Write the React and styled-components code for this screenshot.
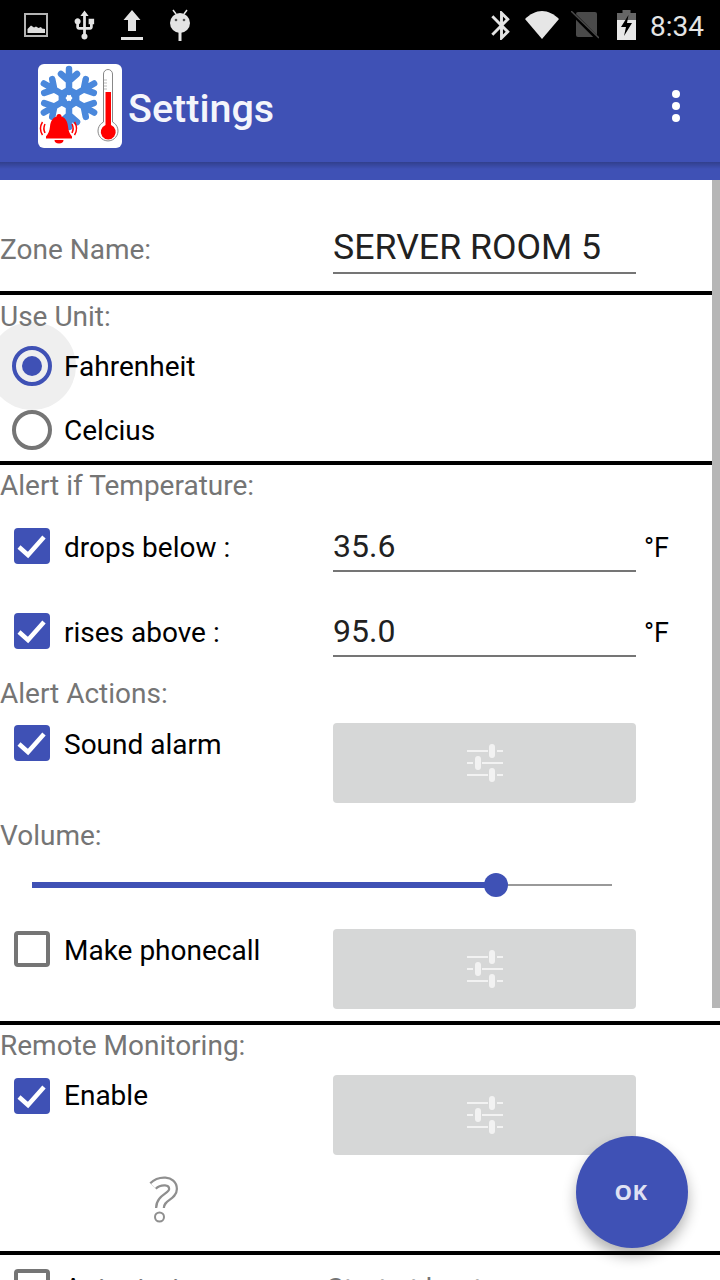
import React from 'react';
import styled, { createGlobalStyle } from 'styled-components';

const INDIGO = '#3f51b5';
const GREY = '#757575';

const GlobalStyle = createGlobalStyle`
  html, body {
    margin: 0;
    padding: 0;
    background: #fff;
    font-family: Roboto, "Liberation Sans", sans-serif;
  }
`;

const Screen = styled.div`
  position: relative;
  isolation: isolate;
  width: 720px;
  height: 1280px;
  overflow: hidden;
  background: #fff;
`;

const StatusBar = styled.div`
  display: flex;
  align-items: center;
  height: 50px;
  padding: 0 16px 0 12px;
  background: #000;
  color: #e4e4e4;
`;

const StatusIcon = styled.div`
  display: flex;
  align-items: center;
  justify-content: center;
  flex: none;
  width: ${p => p.$width || 48}px;
  height: 50px;
`;

const StatusSpacer = styled.div`
  flex: 1;
`;

const Clock = styled.span`
  margin-left: 5px;
  padding-top: 3px;
  font-size: 28px;
  line-height: 47px;
`;

const AppBar = styled.div`
  position: relative;
  display: flex;
  align-items: center;
  height: 112px;
  padding: 0 0 0 38px;
  background: ${INDIGO};

  &::after {
    content: '';
    position: absolute;
    left: 0;
    right: 0;
    bottom: -7px;
    height: 7px;
    background: linear-gradient(rgba(0, 0, 0, 0.22), rgba(0, 0, 0, 0));
    z-index: 1;
  }
`;

const AppBarStrip = styled.div`
  height: 18px;
  background: ${INDIGO};
`;

const LogoBox = styled.div`
  flex: none;
  width: 84px;
  height: 84px;
  border-radius: 6px;
  background: #fff;
  overflow: hidden;

  svg {
    display: block;
  }
`;

const Title = styled.h1`
  flex: 1;
  margin: 4px 0 0 6px;
  font-size: 39.5px;
  font-weight: 500;
  color: #f4f5fb;
`;

const Overflow = styled.div`
  display: flex;
  flex-direction: column;
  gap: 4px;
  margin: 0 40px 0 0;
`;

const OverflowDot = styled.span`
  width: 8px;
  height: 8px;
  border-radius: 50%;
  background: #fff;
`;

const Content = styled.div`
  position: relative;
`;

const ScrollThumb = styled.div`
  position: absolute;
  top: 0;
  right: 0;
  width: 8px;
  height: 828px;
  background: #b6b6b6;
`;

const Divider = styled.div`
  height: 4px;
  background: #000;
`;

const SectionLabel = styled.div`
  box-sizing: border-box;
  height: ${p => p.$height || 40}px;
  padding-top: ${p => p.$pad ?? 2}px;
  font-size: 28px;
  line-height: ${p => (p.$height || 40) - (p.$pad ?? 2)}px;
  color: ${GREY};
`;

const Row = styled.div`
  box-sizing: border-box;
  display: grid;
  grid-template-columns: 333px 303px 1fr;
  align-items: ${p => p.$align || 'center'};
  height: ${p => p.$height}px;
  padding-top: ${p => p.$top || 0}px;
  margin-top: ${p => p.$gap || 0}px;
`;

const ZoneLabel = styled.div`
  padding-top: 2px;
  font-size: 28px;
  color: ${GREY};
`;

const Field = styled.div`
  box-sizing: border-box;
  display: flex;
  align-items: center;
  height: 52px;
  padding-top: ${p => p.$top || 0}px;
  border-bottom: 2px solid ${GREY};
  font-size: ${p => p.$size || 32}px;
  color: #212121;
`;

const Unit = styled.span`
  padding: 4px 0 0 8px;
  font-size: 27px;
  color: #000;
`;

const Option = styled.div`
  display: flex;
  align-items: flex-start;
  gap: 14px;
  padding-left: 14px;
  margin-top: ${p => p.$top || 0}px;
  height: 36px;
  font-size: 28px;
  color: #000;
`;

const OptionText = styled.span`
  padding-top: ${p => p.$top ?? 2}px;
  line-height: 36px;
`;

const CheckBox = styled.span`
  box-sizing: border-box;
  flex: none;
  display: block;
  width: 36px;
  height: 36px;
  border-radius: 4px;
  background: ${p => (p.$checked ? INDIGO : 'transparent')};
  border: ${p => (p.$checked ? 'none' : `4px solid ${GREY}`)};

  svg {
    display: block;
  }
`;

const RadioRow = styled.div`
  box-sizing: border-box;
  display: flex;
  align-items: center;
  gap: 12px;
  height: 64px;
  padding: 2px 0 0 12px;
  font-size: 28px;
  color: #000;
`;

const RadioMark = styled.span`
  position: relative;
  box-sizing: border-box;
  flex: none;
  display: flex;
  align-items: center;
  justify-content: center;
  width: 40px;
  height: 40px;
  border-radius: 50%;
  border: 4px solid ${p => (p.$checked ? INDIGO : GREY)};

  &::before {
    content: '';
    display: ${p => (p.$checked ? 'block' : 'none')};
    width: 20px;
    height: 20px;
    border-radius: 50%;
    background: ${INDIGO};
  }

  &::after {
    content: '';
    display: ${p => (p.$ripple ? 'block' : 'none')};
    position: absolute;
    left: -28px;
    top: -28px;
    width: 88px;
    height: 88px;
    border-radius: 50%;
    background: #efefef;
    z-index: -1;
  }
`;

const SettingsButton = styled.div`
  display: flex;
  align-items: center;
  justify-content: center;
  height: 80px;
  border-radius: 4px;
  background: #d6d7d7;
`;

const SliderRow = styled.div`
  display: flex;
  align-items: center;
  height: 60px;
  padding: 0 108px 0 32px;
`;

const SliderTrack = styled.div`
  position: relative;
  flex: 1;
  height: 2px;
  background: #999;
`;

const SliderFill = styled.div`
  position: absolute;
  left: 0;
  top: -2px;
  height: 6px;
  background: ${INDIGO};
`;

const SliderThumb = styled.div`
  position: absolute;
  top: -11px;
  width: 24px;
  height: 24px;
  margin-left: -12px;
  border-radius: 50%;
  background: ${INDIGO};
`;

const HelpRow = styled.div`
  box-sizing: border-box;
  height: 96px;
  padding: 10px 0 0 130px;

  svg {
    display: block;
  }
`;

const StartLabel = styled.div`
  margin-left: -6px;
  padding-top: 2px;
  font-size: 28px;
  line-height: 36px;
  white-space: nowrap;
  color: ${GREY};
`;

const Fab = styled.button`
  position: absolute;
  right: 32px;
  bottom: 32px;
  width: 112px;
  height: 112px;
  padding: 0 2px 2px 0;
  border: none;
  border-radius: 50%;
  background: ${INDIGO};
  box-shadow: 0 8px 14px rgba(0, 0, 0, 0.3);
  font-family: "Open Sans", sans-serif;
  font-size: 22px;
  font-weight: 700;
  letter-spacing: 0.5px;
  color: #dfe1f3;
`;

const ImageIcon = () => (
  <svg width="24" height="24" viewBox="0 0 24 24">
    <rect x="1" y="1" width="22" height="22" fill="none" stroke="#b4b4b4" strokeWidth="2" />
    <path d="M3.5 20v-4l3.5-3.5 3 2 2-1 2.5 1.5 2.5-1 1 1.500 3 .5V20z" fill="#dedede" />
  </svg>
);

const UsbIcon = () => (
  <svg width="33" height="33" viewBox="0 0 24 24" fill="#e4e4e4">
    <path d="M15 7v4h1v2h-3V5h2l-3-4-3 4h2v8H8v-2.070c.7-.37 1.200-1.080 1.200-1.930 0-1.210-.99-2.200-2.200-2.200-1.210 0-2.200.99-2.200 2.200 0 .85.5 1.560 1.200 1.930V13c0 1.110.89 2 2 2h3v3.050c-.71.37-1.200 1.100-1.200 1.950 0 1.220.99 2.200 2.200 2.200 1.210 0 2.200-.98 2.200-2.200 0-.85-.49-1.580-1.200-1.950V15h3c1.110 0 2-.89 2-2v-2h1V7h-4z" />
  </svg>
);

const UploadIcon = () => (
  <svg width="22" height="30" viewBox="0 0 22 30" fill="#e4e4e4">
    <path d="M7 21V10H2.500L11 0l8.500 10H15v11z" />
    <rect x="0" y="27" width="22" height="3" />
  </svg>
);

const AndroidIcon = () => (
  <svg width="22" height="32" viewBox="0 0 22 32" fill="#e4e4e4">
    <path d="M4 1l3 4M18 1l-3 4" stroke="#e4e4e4" strokeWidth="1.500" />
    <circle cx="11" cy="14" r="10" />
    <rect x="9.500" y="23" width="3" height="9" />
    <circle cx="7" cy="11" r="1.300" fill="#555" />
    <circle cx="15" cy="11" r="1.300" fill="#555" />
  </svg>
);

const BluetoothIcon = () => (
  <svg width="35" height="35" viewBox="0 0 24 24" fill="#e4e4e4">
    <path d="M17.710 7.710L12 2h-1v7.590L6.410 5 5 6.410 10.590 12 5 17.590 6.410 19 11 14.410V22h1l5.710-5.710-4.300-4.290 4.300-4.290zM13 5.830l1.880 1.880L13 9.590V5.830zm1.880 10.460L13 18.170v-3.760l1.880 1.880z" />
  </svg>
);

const WifiIcon = () => (
  <svg width="34" height="28" viewBox="0 0 34 28" fill="#e6e6e6">
    <path d="M17 28L0 8C5 3 11 0 17 0s12 3 17 8z" />
  </svg>
);

const NoSimIcon = () => (
  <svg width="28" height="28" viewBox="0 0 28 28">
    <path d="M5 3a2 2 0 0 1 2-2h17a2 2 0 0 1 2 2v21a2 2 0 0 1-2 2H7a2 2 0 0 1-2-2z" fill="#4a4a4a" />
    <path d="M0 1l27 27" stroke="#000" strokeWidth="4" />
    <path d="M0 0l28 27" stroke="#4a4a4a" strokeWidth="1.500" />
  </svg>
);

const BatteryIcon = () => (
  <svg width="19" height="30" viewBox="0 0 19 30">
    <path d="M5.500 0h8v3H19v9H0V3h5.500z" fill="#666" />
    <path d="M0 10h19v20H0z" fill="#e8e8e8" />
    <path d="M11.500 5L4 17h5l-2 9 8-13h-5z" fill="#000" />
  </svg>
);

const Logo = () => (
  <svg width="84" height="84" viewBox="0 0 84 84">
    <g transform="translate(31 34)" stroke="#4a88dc" strokeWidth="6.500" strokeLinecap="round" fill="none">
      {[0, 60, 120, 180, 240, 300].map(a => (
        <g key={a} transform={`rotate(${a})`}>
          <path d="M0 -6V-29M0 -17L-8 -24M0 -17L8 -24" />
          <path d="M0 -8.500L7.400 -4.300" strokeWidth="6" />
        </g>
      ))}
    </g>
    <path d="M18.500 52.500a2.500 2.500 0 0 1 5 0c4.500 1.500 6 5.500 6.500 10 .4 4.500 1.500 7 4 10v2H8v-2c2.500-3 3.600-5.500 4-10 .5-4.500 2-8.500 6.500-10z" fill="#ff0000" />
    <path d="M16.500 76h9a4.500 3.500 0 0 1-9 0z" fill="#ff0000" />
    <g fill="none" stroke="#ff0000" strokeWidth="1.500">
      <path d="M7 60c-1.500 3-1.500 6 0 9" />
      <path d="M4.500 58c-2.500 4-2.500 9 0 13" />
      <path d="M34 60c1.500 3 1.500 6 0 9" />
      <path d="M36.500 58c2.500 4 2.500 9 0 13" />
    </g>
    <path d="M65.500 10a4.500 4.500 0 0 1 9 0v48a10 10 0 1 1-9 0z" fill="#fff" stroke="#888" strokeWidth="1" />
    <path d="M67.500 28h5.500v33a7.500 7.500 0 1 1-5.500 0z" fill="#ff0000" />
    <path d="M66 16h3M66 19h3M66 22h3M66 25h3" stroke="#aaa" strokeWidth="0.800" />
  </svg>
);

const TuneIcon = () => (
  <svg width="36" height="38" viewBox="0 0 36 38" fill="#f2f2f2">
    <rect x="0" y="6" width="21" height="2" />
    <rect x="30" y="6" width="6" height="2" />
    <rect x="22" y="0" width="6" height="14" rx="3" />
    <rect x="0" y="18" width="6" height="2" />
    <rect x="15" y="18" width="21" height="2" />
    <rect x="8" y="12" width="6" height="14" rx="3" />
    <rect x="0" y="30" width="21" height="2" />
    <rect x="30" y="30" width="6" height="2" />
    <rect x="22" y="24" width="6" height="14" rx="3" />
  </svg>
);

const HelpIcon = () => (
  <svg width="60" height="65" viewBox="0 0 60 65" fill="none">
    <path d="M23 21C29 15 43 14 43 24C43 32 30 32 30 43" stroke="#8f8f8f" strokeWidth="10" strokeLinejoin="round" />
    <path d="M23 21C29 15 43 14 43 24C43 32 30 32 30 43" stroke="#fff" strokeWidth="5.500" strokeLinejoin="round" />
    <circle cx="29.500" cy="52" r="4.500" stroke="#8f8f8f" strokeWidth="2" />
  </svg>
);

const Check = ({ checked, top, textTop, children }) => (
  <Option $top={top}>
    <CheckBox $checked={checked}>
      {checked && (
        <svg width="36" height="36" viewBox="0 0 36 36" fill="none">
          <path d="M5 19l9 8L30 9" stroke="#fff" strokeWidth="4.500" />
        </svg>
      )}
    </CheckBox>
    <OptionText $top={textTop}>{children}</OptionText>
  </Option>
);

const VOLUME = 80;

const App = () => (
  <Screen>
    <GlobalStyle />
    <StatusBar>
      <StatusIcon><ImageIcon /></StatusIcon>
      <StatusIcon><UsbIcon /></StatusIcon>
      <StatusIcon><UploadIcon /></StatusIcon>
      <StatusIcon><AndroidIcon /></StatusIcon>
      <StatusSpacer />
      <StatusIcon $width={40}><BluetoothIcon /></StatusIcon>
      <StatusIcon $width={42}><WifiIcon /></StatusIcon>
      <StatusIcon $width={44}><NoSimIcon /></StatusIcon>
      <StatusIcon $width={38}><BatteryIcon /></StatusIcon>
      <Clock>8:34</Clock>
    </StatusBar>

    <AppBar>
      <LogoBox><Logo /></LogoBox>
      <Title>Settings</Title>
      <Overflow>
        <OverflowDot />
        <OverflowDot />
        <OverflowDot />
      </Overflow>
    </AppBar>
    <AppBarStrip />

    <Content>
      <Row $height={111} $top={25}>
        <ZoneLabel>Zone Name:</ZoneLabel>
        <Field $size={35.7}>SERVER ROOM 5</Field>
      </Row>
      <Divider />

      <SectionLabel $height={38} $pad={5}>Use Unit:</SectionLabel>
      <RadioRow>
        <RadioMark $checked $ripple />
        Fahrenheit
      </RadioRow>
      <RadioRow>
        <RadioMark />
        Celcius
      </RadioRow>
      <Divider />

      <SectionLabel $height={39} $pad={3}>Alert if Temperature:</SectionLabel>
      <Row $height={84}>
        <Check checked>drops below :</Check>
        <Field $top={2}>35.6</Field>
        <Unit>°F</Unit>
      </Row>
      <Row $height={84} $gap={1}>
        <Check checked>rises above :</Check>
        <Field $top={2}>95.0</Field>
        <Unit>°F</Unit>
      </Row>

      <SectionLabel>Alert Actions:</SectionLabel>
      <Row $height={102} $top={10} $align="start">
        <Check checked top={2}>Sound alarm</Check>
        <SettingsButton><TuneIcon /></SettingsButton>
      </Row>

      <SectionLabel>Volume:</SectionLabel>
      <SliderRow>
        <SliderTrack>
          <SliderFill style={{ width: `${VOLUME}%` }} />
          <SliderThumb style={{ left: `${VOLUME}%` }} />
        </SliderTrack>
      </SliderRow>
      <Row $height={106} $top={14} $align="start">
        <Check top={2}>Make phonecall</Check>
        <SettingsButton><TuneIcon /></SettingsButton>
      </Row>
      <Divider />

      <SectionLabel>Remote Monitoring:</SectionLabel>
      <Row $height={90} $top={10} $align="start">
        <Check checked top={3} textTop={0}>Enable</Check>
        <SettingsButton><TuneIcon /></SettingsButton>
      </Row>
      <HelpRow><HelpIcon /></HelpRow>
      <Divider />

      <Row $height={60} $top={14} $align="start">
        <Check>Autostart</Check>
        <StartLabel>Start at boot</StartLabel>
      </Row>

      <ScrollThumb />
    </Content>

    <Fab type="button">OK</Fab>
  </Screen>
);

export default App;
